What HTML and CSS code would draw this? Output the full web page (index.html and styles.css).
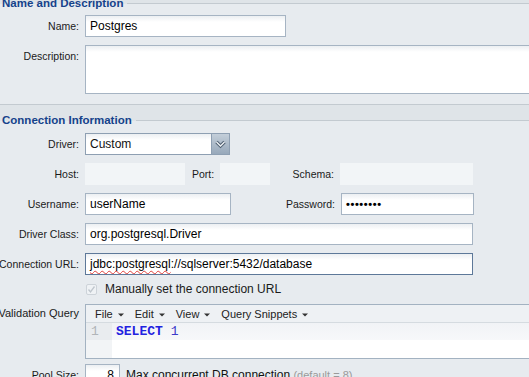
FILE: index.html
```html
<!DOCTYPE html>
<html>
<head>
<meta charset="utf-8">
<link rel="stylesheet" href="styles.css">
</head>
<body>
<div class="page">
  <div class="section first">
    <div class="legend-row"><span class="legend">Name and Description</span><span class="legend-line"></span></div>
    <div class="row name-row">
      <div class="label">Name:</div>
      <div class="field w200">Postgres</div>
    </div>
    <div class="row tall">
      <div class="label top">Description:</div>
      <div class="field area"></div>
    </div>
  </div>

  <div class="section second">
    <div class="legend-row"><span class="legend">Connection Information</span><span class="legend-line"></span></div>
    <div class="row first-row">
      <div class="label">Driver:</div>
      <div class="combo">
        <div class="combo-text">Custom</div>
        <div class="trigger">
          <svg width="17" height="20" viewBox="0 0 17 20"><polyline points="4.5,8 8.5,12 12.5,8" fill="none" stroke="#4b5b6d" stroke-width="3.2"/><polyline points="4.5,8 8.5,12 12.5,8" fill="none" stroke="#eef2f5" stroke-width="1.4"/></svg>
        </div>
      </div>
    </div>
    <div class="row">
      <div class="label">Host:</div>
      <div class="field disabled w100"></div>
      <div class="inline-label port-label">Port:</div>
      <div class="field disabled w50"></div>
      <div class="label side">Schema:</div>
      <div class="field disabled w132"></div>
    </div>
    <div class="row">
      <div class="label">Username:</div>
      <div class="field w146">userName</div>
      <div class="label side2">Password:</div>
      <div class="field w132 pw">••••••••</div>
    </div>
    <div class="row">
      <div class="label">Driver Class:</div>
      <div class="field w388">org.postgresql.Driver</div>
    </div>
    <div class="row">
      <div class="label">Connection URL:</div>
      <div class="field w388 focus"><span class="spell">jdbc:postgresql</span>://sqlserver:5432/database</div>
    </div>
    <div class="check-row">
      <div class="checkbox">
        <svg width="11" height="11" viewBox="0 0 11 11"><polyline points="2.5,5.5 4.5,8 8.5,2.5" fill="none" stroke="#bfc6cd" stroke-width="1.3"/></svg>
      </div>
      <span class="check-text">Manually set the connection URL</span>
    </div>
    <div class="editor-row">
      <div class="label top2">Validation Query</div>
      <div class="editor">
        <div class="toolbar">
          <span class="menu">File <svg class="arr" width="6" height="4" viewBox="0 0 6 4"><polygon points="0,0.5 6,0.5 3,3.5" fill="#333"/></svg></span>
          <span class="menu">Edit <svg class="arr" width="6" height="4" viewBox="0 0 6 4"><polygon points="0,0.5 6,0.5 3,3.5" fill="#333"/></svg></span>
          <span class="menu">View <svg class="arr" width="6" height="4" viewBox="0 0 6 4"><polygon points="0,0.5 6,0.5 3,3.5" fill="#333"/></svg></span>
          <span class="menu">Query Snippets <svg class="arr" width="6" height="4" viewBox="0 0 6 4"><polygon points="0,0.5 6,0.5 3,3.5" fill="#333"/></svg></span>
        </div>
        <div class="code">
          <div class="code-line"><span class="gutter">1</span><span class="src"><span class="kw">SELECT</span> <span class="num">1</span></span></div>
          <div class="code-rest"><span class="gutter-blank"></span><span class="src-blank"></span></div>
        </div>
      </div>
    </div>
    <div class="row pool-row">
      <div class="label">Pool Size:</div>
      <div class="field w35 num-field">8</div>
      <span class="pool-text">Max concurrent DB connection <span class="hint">(default = 8)</span></span>
    </div>
  </div>
</div>
</body>
</html>
```

FILE: styles.css
```css
html, body {
  margin: 0;
  padding: 0;
}
body {
  width: 529px;
  height: 377px;
  overflow: hidden;
  background: #dfe4e8;
  font-family: "Liberation Sans", Arial, sans-serif;
  color: #111;
}
.page {
  width: 529px;
}
.section {
  background: linear-gradient(#dfe4e8 0 7px, #e7ebef 7px);
}
.section.first {
  margin-top: -3px;
  padding-bottom: 10px;
  border-bottom: 1px solid #c3cad0;
}
.section.second {
  margin-top: 9px;
  padding-bottom: 20px;
}
.legend-row {
  display: flex;
  align-items: center;
  height: 13px;
}
.legend {
  font-size: 11.5px;
  font-weight: bold;
  color: #15428b;
  padding: 0 4px 0 2px;
  white-space: nowrap;
  line-height: 13px;
}
.legend-line {
  flex: 1;
  border-top: 1px solid #c3cad0;
}
.row {
  display: flex;
  align-items: center;
  height: 22px;
  margin-top: 8px;
}
.row.name-row {
  margin-top: 5px;
}
.row.first-row {
  margin-top: 6px;
}
.row.tall {
  height: 49px;
  align-items: flex-start;
}
.label {
  flex: none;
  width: 79px;
  margin-right: 6px;
  display: flex;
  justify-content: flex-end;
  white-space: nowrap;
  font-size: 10.5px;
  color: #1a1a1a;
}
.label.top {
  padding-top: 5px;
  align-self: flex-start;
}
.label.side {
  width: 64px;
}
.label.side2 {
  width: 104px;
}
.inline-label {
  font-size: 10.5px;
  color: #1a1a1a;
  white-space: nowrap;
}
.port-label {
  margin-left: 7px;
  margin-right: 4px;
  width: 24px;
}
.field {
  flex: none;
  box-sizing: border-box;
  height: 22px;
  border: 1px solid #a6b4c3;
  background: linear-gradient(#eceff2 0, #ffffff 6px);
  font-size: 12px;
  line-height: 20px;
  padding-left: 4px;
  white-space: nowrap;
  overflow: hidden;
  color: #000;
}
.field.focus {
  border-color: #5d7899;
}
.field.disabled {
  border: none;
  background: #f2f5f7;
}
.field.area {
  width: 460px;
  height: 49px;
  border-right: none;
}
.w200 { width: 201px; }
.w100 { width: 100px; }
.w50 { width: 50px; }
.w132 { width: 133px; }
.w146 { width: 146px; }
.w388 { width: 388px; }
.w35 { width: 35px; }
.pw {
  font-size: 11px;
  letter-spacing: 0.6px;
  font-weight: bold;
}
.spell {
  text-decoration: underline wavy #e0403c;
  text-decoration-thickness: 1px;
  text-underline-offset: 2px;
}
.combo {
  flex: none;
  display: flex;
  width: 145px;
  height: 22px;
  box-sizing: border-box;
  border: 1px solid #8e9fb2;
}
.combo-text {
  flex: 1;
  background: linear-gradient(#eceff2 0, #ffffff 6px);
  font-size: 12px;
  line-height: 20px;
  padding-left: 4px;
}
.trigger {
  width: 17px;
  background: linear-gradient(#c3ced9, #97a8ba);
  border-left: 1px solid #8e9fb2;
  display: flex;
  align-items: center;
  justify-content: center;
}
.check-row {
  display: flex;
  align-items: center;
  height: 16px;
  margin-top: 6px;
  padding-left: 86px;
}
.checkbox {
  width: 11px;
  height: 11px;
  box-sizing: border-box;
  border: 1px solid #cdd3d9;
  border-radius: 2px;
  background: #eff2f5;
  display: flex;
}
.checkbox svg {
  margin: -1px;
}
.check-text {
  margin-left: 8px;
  font-size: 12px;
  color: #1a1a1a;
}
.editor-row {
  display: flex;
  margin-top: 7px;
}
.label.top2 {
  font-size: 11px;
  padding-top: 3px;
}
.editor {
  flex: none;
  width: 460px;
  height: 55px;
  box-sizing: border-box;
  border: 1px solid #a3b2c1;
  border-right: none;
  background: #fff;
}
.toolbar {
  height: 17px;
  background: #eef1f4;
  border-bottom: 1px solid #d5dbe0;
  display: flex;
  align-items: center;
  padding-left: 9px;
  gap: 11px;
  font-size: 11px;
  color: #222;
}
.menu {
  display: flex;
  align-items: center;
  white-space: nowrap;
}
.arr {
  margin-left: 5px;
  margin-top: 2px;
}
.code {
  display: flex;
  flex-direction: column;
}
.code-line {
  display: flex;
  height: 17px;
}
.gutter {
  width: 26px;
  flex: none;
  background: #e9ecef;
  color: #b0b4b8;
  font-family: "Liberation Mono", monospace;
  font-size: 13px;
  line-height: 17px;
  padding-left: 5px;
  box-sizing: border-box;
}
.src {
  flex: 1;
  background: linear-gradient(#f1f3f6, #f7f8fa);
  font-family: "Liberation Mono", monospace;
  font-size: 13px;
  line-height: 17px;
  padding-left: 4px;
}
.kw {
  color: #1f22e0;
  font-weight: bold;
}
.num {
  color: #3b3bc9;
}
.code-rest {
  display: flex;
  height: 18px;
}
.gutter-blank {
  width: 26px;
  background: #f2f4f6;
}
.src-blank {
  flex: 1;
  background: #fff;
}
.row.pool-row {
  margin-top: 5px;
}
.num-field {
  text-align: right;
  padding-right: 5px;
}
.pool-text {
  margin-left: 6px;
  font-size: 12px;
  color: #111;
  white-space: nowrap;
}
.hint {
  color: #9a9a9a;
  font-size: 11px;
}
```
